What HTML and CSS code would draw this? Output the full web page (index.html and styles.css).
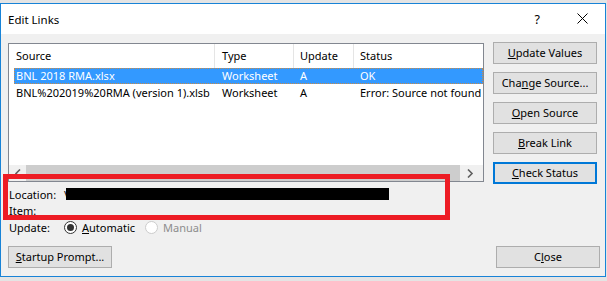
FILE: index.html
```html
<!DOCTYPE html>
<html lang="en">
<head>
  <meta charset="UTF-8" />
  <title>Edit Links</title>
  <link rel="stylesheet" href="styles.css">
</head>
<body>
  <div class="dialog">
    <div class="titlebar">
      <span class="title">Edit Links</span>
      <span class="help">?</span>
      <svg class="close-x" width="11" height="11" viewBox="0 0 11 11">
        <path d="M0.5 0.5 L10.5 10.5 M10.5 0.5 L0.5 10.5" stroke="#000" stroke-width="1" fill="none"/>
      </svg>
    </div>

    <div class="content">
      <div class="top">
        <div class="list">
          <div class="head">
            <div class="cell c1">Source</div>
            <div class="cell c2">Type</div>
            <div class="cell c3">Update</div>
            <div class="cell c4">Status</div>
          </div>
          <div class="rows">
            <div class="row selected">
              <div class="cell c1">BNL 2018 RMA.xlsx</div>
              <div class="cell c2">Worksheet</div>
              <div class="cell c3">A</div>
              <div class="cell c4">OK</div>
            </div>
            <div class="row">
              <div class="cell c1">BNL%202019%20RMA (version 1).xlsb</div>
              <div class="cell c2">Worksheet</div>
              <div class="cell c3">A</div>
              <div class="cell c4">Error: Source not found</div>
            </div>
          </div>
          <div class="hscroll">
            <span class="arrow">
              <svg width="8" height="9" viewBox="0 0 8 9"><path d="M6 0.5 L2 4.5 L6 8.5" stroke="#606060" stroke-width="1.6" fill="none"/></svg>
            </span>
            <span class="thumb"></span>
            <span class="arrow right">
              <svg width="8" height="9" viewBox="0 0 8 9"><path d="M2 0.5 L6 4.5 L2 8.5" stroke="#606060" stroke-width="1.6" fill="none"/></svg>
            </span>
          </div>
        </div>

        <div class="side">
          <button class="btn"><u>U</u>pdate Values</button>
          <button class="btn">Cha<u>n</u>ge Source...</button>
          <button class="btn"><u>O</u>pen Source</button>
          <button class="btn"><u>B</u>reak Link</button>
          <button class="btn focused"><u>C</u>heck Status</button>
        </div>
      </div>

      <div class="info">
        <div class="info-row">
          <span class="label">Location:</span>
          <span class="value"><span class="slash">\</span><span class="redact"></span></span>
        </div>
        <div class="info-row">
          <span class="label">Item:</span>
        </div>
        <div class="info-row">
          <span class="label">Update:</span>
          <span class="radio on"><span class="dot"></span><u>A</u>utomatic</span>
          <span class="radio off"><span class="dot"></span>Manual</span>
        </div>
      </div>

      <div class="bottom">
        <button class="btn"><u>S</u>tartup Prompt...</button>
        <button class="btn close">C<u>l</u>ose</button>
      </div>
    </div>
  </div>

  <div class="annotation"></div>
</body>
</html>
```

FILE: styles.css
```css
body {
  margin: 0;
  width: 607px;
  height: 281px;
  overflow: hidden;
  background: #e4e4e4;
  font-family: 'Noto Sans', 'Segoe UI', sans-serif;
  font-size: 11px;
  color: #000;
  position: relative;
}
.dialog {
  margin-top: 3px;
  width: 606px;
  height: 274px;
  box-sizing: border-box;
  border: 1px solid #1883d7;
  background: #f0f0f0;
  display: flex;
  flex-direction: column;
}
.titlebar {
  height: 30px;
  background: #fff;
  display: flex;
  align-items: center;
  padding-left: 7px;
  flex-shrink: 0;
}
.title {
  flex: 1;
  font-size: 11.5px;
}
.help {
  font-size: 12.5px;
  margin-right: 37px;
}
.close-x {
  margin-right: 17px;
  margin-top: -2px;
}
.content {
  padding: 8px 6px 0 7px;
  display: flex;
  flex-direction: column;
}
.top {
  display: flex;
  gap: 9px;
}
.list {
  margin-top: 1px;
  width: 476px;
  height: 139px;
  box-sizing: border-box;
  border: 1px solid #828790;
  background: #fff;
  display: flex;
  flex-direction: column;
  overflow: hidden;
}
.head {
  display: flex;
  height: 24px;
  line-height: 24px;
  padding-left: 5px;
  flex-shrink: 0;
}
.head .cell {
  border-right: 1px solid #e5e5e5;
}
.rows {
  flex: 1;
  padding-left: 5px;
}
.row {
  display: flex;
  height: 17px;
  line-height: 17px;
  white-space: nowrap;
  overflow: hidden;
}
.row.selected {
  background: #3399ff;
  color: #fff;
  height: 16px;
  line-height: 16px;
  outline: 1px dotted #c98a46;
  outline-offset: -1px;
}
.cell {
  box-sizing: border-box;
  white-space: nowrap;
  flex-shrink: 0;
}
.c1 { width: 201px; padding-left: 2px; }
.c2 { width: 79px; padding-left: 7px; }
.c3 { width: 60px; padding-left: 6px; }
.c4 { width: 200px; padding-left: 6px; }
.hscroll {
  height: 16px;
  display: flex;
  background: #f0f0f0;
  flex-shrink: 0;
}
.arrow {
  width: 17px;
  display: flex;
  align-items: center;
  justify-content: center;
}
.arrow.right {
  width: 23px;
  justify-content: flex-start;
  padding-left: 6px;
  box-sizing: border-box;
}
.thumb {
  flex: 1;
  background: #cdcdcd;
}
.side {
  display: flex;
  flex-direction: column;
  gap: 8px;
}
.btn {
  width: 104px;
  height: 22px;
  box-sizing: border-box;
  background: #e1e1e1;
  border: 1px solid #adadad;
  font-family: inherit;
  font-size: 11px;
  color: #000;
  padding: 0;
  line-height: 18px;
}
.btn.focused {
  border: 2px solid #0078d7;
}
.info {
  margin-top: 2px;
  padding-left: 1px;
}
.info-row {
  display: flex;
  align-items: center;
  height: 16px;
}
.info-row + .info-row {
  margin-top: 0.5px;
}
.label {
  width: 55px;
}
.value {
  display: flex;
  align-items: center;
}
.redact {
  display: inline-block;
  width: 323px;
  height: 12px;
  margin-left: -2px;
  background: #000;
}
.radio {
  display: flex;
  align-items: center;
}
.radio .dot {
  width: 13px;
  height: 13px;
  box-sizing: border-box;
  border-radius: 50%;
  border: 1px solid #333;
  background: #fff;
  margin-right: 5px;
  position: relative;
}
.radio.on .dot::after {
  content: "";
  position: absolute;
  left: 2px;
  top: 2px;
  width: 7px;
  height: 7px;
  border-radius: 50%;
  background: #333;
}
.radio.off {
  margin-left: 10px;
  color: #8d8d8d;
}
.radio.off .dot {
  border-color: #cccccc;
}
.bottom {
  margin-top: 11px;
  display: flex;
  justify-content: space-between;
}
.close {
  margin-right: -1px;
}
.annotation {
  position: absolute;
  left: 3px;
  top: 174px;
  width: 447px;
  height: 46px;
  box-sizing: border-box;
  border: 5px solid #ed1c24;
}
```
